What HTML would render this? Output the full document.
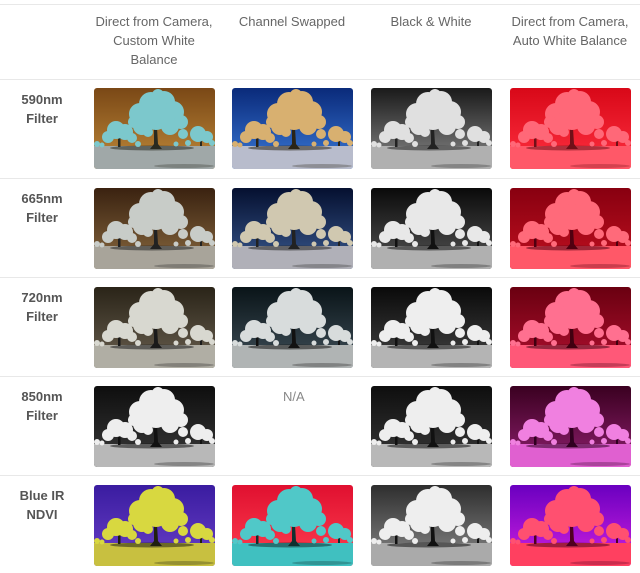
<!DOCTYPE html>
<html><head><meta charset="utf-8"><style>
body{margin:0;width:640px;height:573px;background:#fff;font-family:"Liberation Sans","DejaVu Sans",sans-serif;position:relative;overflow:hidden}
.h{position:absolute;top:12px;width:124px;text-align:center;color:#666;font-size:13px;line-height:19px}
.l{position:absolute;left:0;width:84px;text-align:center;color:#555;font-size:13px;line-height:19px;font-weight:bold}
.line{position:absolute;left:0;width:640px;height:1px;background:#e8e8e8}
.c{position:absolute;width:121px;height:81px;border-radius:3px;overflow:hidden}
.c svg{display:block}
.na{position:absolute;color:#888;font-size:13px}
</style></head><body>
<svg width="0" height="0" style="position:absolute">
<defs>
<symbol id="t" viewBox="0 0 121 81">
<rect x="0" y="58" width="121" height="23" style="fill:var(--g)"/>
<ellipse cx="58" cy="60" rx="42" ry="2.5" style="fill:var(--d)" opacity=".55"/>
<ellipse cx="90" cy="78" rx="30" ry="2" style="fill:var(--d)" opacity=".3"/>
<g style="fill:var(--d)">
<path d="M60 40 L63 40 L64 56 L68 61 L56 61 L60 56 Z"/>
<rect x="24" y="46" width="2.5" height="13"/>
<rect x="106" y="48" width="2" height="10"/>
</g>
<g style="fill:var(--t)">
<circle cx="46" cy="26" r="11"/><circle cx="57" cy="16" r="12"/><circle cx="70" cy="14" r="11"/>
<circle cx="79" cy="24" r="11"/><circle cx="62" cy="29" r="13"/><circle cx="48" cy="38" r="9"/>
<circle cx="76" cy="38" r="9"/><circle cx="87" cy="34" r="7"/><circle cx="64" cy="7" r="6"/>
<circle cx="40" cy="34" r="6"/><circle cx="89" cy="46" r="5"/><circle cx="54" cy="44" r="5"/>
<circle cx="22" cy="42" r="9"/><circle cx="31" cy="44" r="8"/><circle cx="14" cy="49" r="6"/><circle cx="38" cy="50" r="5"/>
<circle cx="104" cy="46" r="8"/><circle cx="113" cy="49" r="6"/>
<circle cx="3" cy="56" r="3"/><circle cx="8" cy="57" r="2.5"/><circle cx="44" cy="56" r="3"/><circle cx="82" cy="56" r="2.5"/><circle cx="94" cy="55" r="3"/><circle cx="118" cy="55" r="3"/>
</g>
</symbol>
</defs></svg>

<div class="line" style="top:4px"></div>
<div class="h" style="left:92px">Direct from Camera, Custom White Balance</div>
<div class="h" style="left:230px">Channel Swapped</div>
<div class="h" style="left:369px">Black &amp; White</div>
<div class="h" style="left:508px">Direct from Camera, Auto White Balance</div>

<div class="line" style="top:79px"></div>
<div class="line" style="top:178px"></div>
<div class="line" style="top:277px"></div>
<div class="line" style="top:376px"></div>
<div class="line" style="top:475px"></div>

<div class="l" style="top:90px">590nm<br>Filter</div>
<div class="l" style="top:189px">665nm<br>Filter</div>
<div class="l" style="top:288px">720nm<br>Filter</div>
<div class="l" style="top:387px">850nm<br>Filter</div>
<div class="l" style="top:486px">Blue IR<br>NDVI</div>

<div class="c" style="left:94px;top:88px;background:linear-gradient(#7a4816,#c08a3a);--t:#7cc8cc;--g:#a0a8a8;--d:#2a2a20"><svg width="121" height="81"><use href="#t"/></svg></div>
<div class="c" style="left:232px;top:88px;background:linear-gradient(#0a2a7a,#3a7ad8);--t:#d8b070;--g:#b8bccc;--d:#2a2418"><svg width="121" height="81"><use href="#t"/></svg></div>
<div class="c" style="left:371px;top:88px;background:linear-gradient(#1a1a1a,#8a8a8a);--t:#e0e0e0;--g:#b0b0b0;--d:#222"><svg width="121" height="81"><use href="#t"/></svg></div>
<div class="c" style="left:510px;top:88px;background:linear-gradient(#d80818,#ff3040);--t:#ff6878;--g:#ff5868;--d:#701018"><svg width="121" height="81"><use href="#t"/></svg></div>

<div class="c" style="left:94px;top:188px;background:linear-gradient(#3a2210,#8a6a40);--t:#c8ccc8;--g:#a8a49a;--d:#222"><svg width="121" height="81"><use href="#t"/></svg></div>
<div class="c" style="left:232px;top:188px;background:linear-gradient(#051030,#3a5a90);--t:#d0c8b0;--g:#b0b0b8;--d:#222"><svg width="121" height="81"><use href="#t"/></svg></div>
<div class="c" style="left:371px;top:188px;background:linear-gradient(#0a0a0a,#555);--t:#e8e8e8;--g:#b0b0b0;--d:#111"><svg width="121" height="81"><use href="#t"/></svg></div>
<div class="c" style="left:510px;top:188px;background:linear-gradient(#880010,#c01020);--t:#ff6a7a;--g:#ff5868;--d:#500010"><svg width="121" height="81"><use href="#t"/></svg></div>

<div class="c" style="left:94px;top:287px;background:linear-gradient(#2a2418,#6a6050);--t:#d8d8d0;--g:#b0aea4;--d:#1a1a1a"><svg width="121" height="81"><use href="#t"/></svg></div>
<div class="c" style="left:232px;top:287px;background:linear-gradient(#0a1418,#40505a);--t:#d8dcdc;--g:#b0b4b4;--d:#111"><svg width="121" height="81"><use href="#t"/></svg></div>
<div class="c" style="left:371px;top:287px;background:linear-gradient(#0a0a0a,#444);--t:#eee;--g:#b4b4b4;--d:#111"><svg width="121" height="81"><use href="#t"/></svg></div>
<div class="c" style="left:510px;top:287px;background:linear-gradient(#6a0010,#b01030);--t:#ff7090;--g:#ff5878;--d:#400010"><svg width="121" height="81"><use href="#t"/></svg></div>

<div class="c" style="left:94px;top:386px;background:linear-gradient(#0e0e0e,#3a3a3a);--t:#eee;--g:#b8b8b8;--d:#111"><svg width="121" height="81"><use href="#t"/></svg></div>
<div class="na" style="left:283px;top:389px">N/A</div>
<div class="c" style="left:371px;top:386px;background:linear-gradient(#0e0e0e,#3a3a3a);--t:#eee;--g:#b8b8b8;--d:#111"><svg width="121" height="81"><use href="#t"/></svg></div>
<div class="c" style="left:510px;top:386px;background:linear-gradient(#3a0020,#902070);--t:#f080e0;--g:#e060d0;--d:#300020"><svg width="121" height="81"><use href="#t"/></svg></div>

<div class="c" style="left:94px;top:485px;background:linear-gradient(#3a1ca0,#6a40c8);--t:#d8d840;--g:#c8c040;--d:#202010"><svg width="121" height="81"><use href="#t"/></svg></div>
<div class="c" style="left:232px;top:485px;background:linear-gradient(#e01030,#ff4050);--t:#50c8c8;--g:#40c0c0;--d:#103030"><svg width="121" height="81"><use href="#t"/></svg></div>
<div class="c" style="left:371px;top:485px;background:linear-gradient(#2e2e2e,#8a8a8a);--t:#eee;--g:#aaa;--d:#111"><svg width="121" height="81"><use href="#t"/></svg></div>
<div class="c" style="left:510px;top:485px;background:linear-gradient(#6a00c0,#d020e0);--t:#ff5070;--g:#ff4060;--d:#500020"><svg width="121" height="81"><use href="#t"/></svg></div>
</body></html>
